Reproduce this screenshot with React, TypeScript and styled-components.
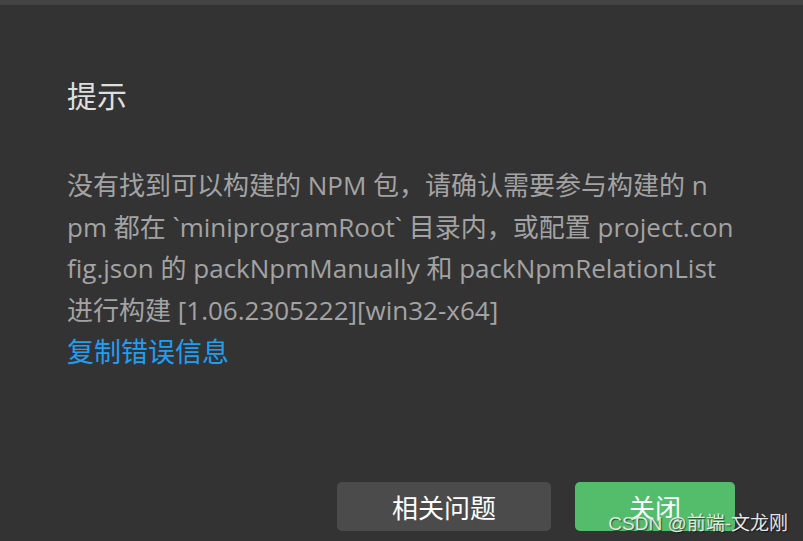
import React from 'react';
import styled, { createGlobalStyle } from 'styled-components';

const GlobalStyle = createGlobalStyle`
  html, body {
    margin: 0;
    padding: 0;
    background: #333333;
  }
  body {
    font-family: "Open Sans", "Noto Sans CJK SC", sans-serif;
  }
`;

const Dialog = styled.div`
  position: relative;
  width: 803px;
  height: 541px;
  display: flex;
  flex-direction: column;
  box-sizing: border-box;
  background: #333333;
  border-top: 5px solid #444444;
  overflow: hidden;
`;

const Body = styled.div`
  padding: 71px 68px 0 67px;
`;

const Title = styled.h2`
  margin: 0 0 49px;
  font-size: 30px;
  line-height: 40px;
  font-weight: 400;
  color: #dedede;
`;

const Message = styled.p`
  margin: 0;
  font-size: 26px;
  line-height: 41.6px;
  color: #a3a3a3;
`;

const Line = styled.span`
  display: block;
  white-space: nowrap;
`;

const CopyLink = styled.a`
  display: block;
  font-size: 27px;
  line-height: 41.6px;
  color: #1f9ef2;
  text-decoration: none;
  cursor: pointer;
`;

const Footer = styled.div`
  margin-top: auto;
  display: flex;
  justify-content: flex-end;
  gap: 24px;
  padding: 0 68px 10px 0;
`;

const Button = styled.button<{ $primary?: boolean }>`
  width: ${(p) => (p.$primary ? '160px' : '214px')};
  height: 49px;
  border: none;
  border-radius: 5px;
  background: ${(p) => (p.$primary ? '#53bd6b' : '#4b4b4b')};
  color: #ffffff;
  font-family: inherit;
  font-size: 26px;
  cursor: pointer;
`;

const Watermark = styled.div`
  position: absolute;
  right: 15px;
  bottom: 6px;
  font-family: "Liberation Sans", "Noto Sans CJK SC", sans-serif;
  font-size: 19px;
  color: #e6e6e6;
  text-shadow: 1px 1px 1px rgba(0, 0, 0, 0.6);
  pointer-events: none;
`;

const lines = [
  '没有找到可以构建的 NPM 包，请确认需要参与构建的 n',
  'pm 都在 `miniprogramRoot` 目录内，或配置 project.con',
  'fig.json 的 packNpmManually 和 packNpmRelationList',
  '进行构建 [1.06.2305222][win32-x64]',
];

export default function App() {
  return (
    <>
      <GlobalStyle />
      <Dialog>
        <Body>
          <Title>提示</Title>
          <Message>
            {lines.map((l) => (
              <Line key={l}>{l}</Line>
            ))}
          </Message>
          <CopyLink>复制错误信息</CopyLink>
        </Body>
        <Footer>
          <Button>相关问题</Button>
          <Button $primary>关闭</Button>
        </Footer>
        <Watermark>CSDN @前端-文龙刚</Watermark>
      </Dialog>
    </>
  );
}
